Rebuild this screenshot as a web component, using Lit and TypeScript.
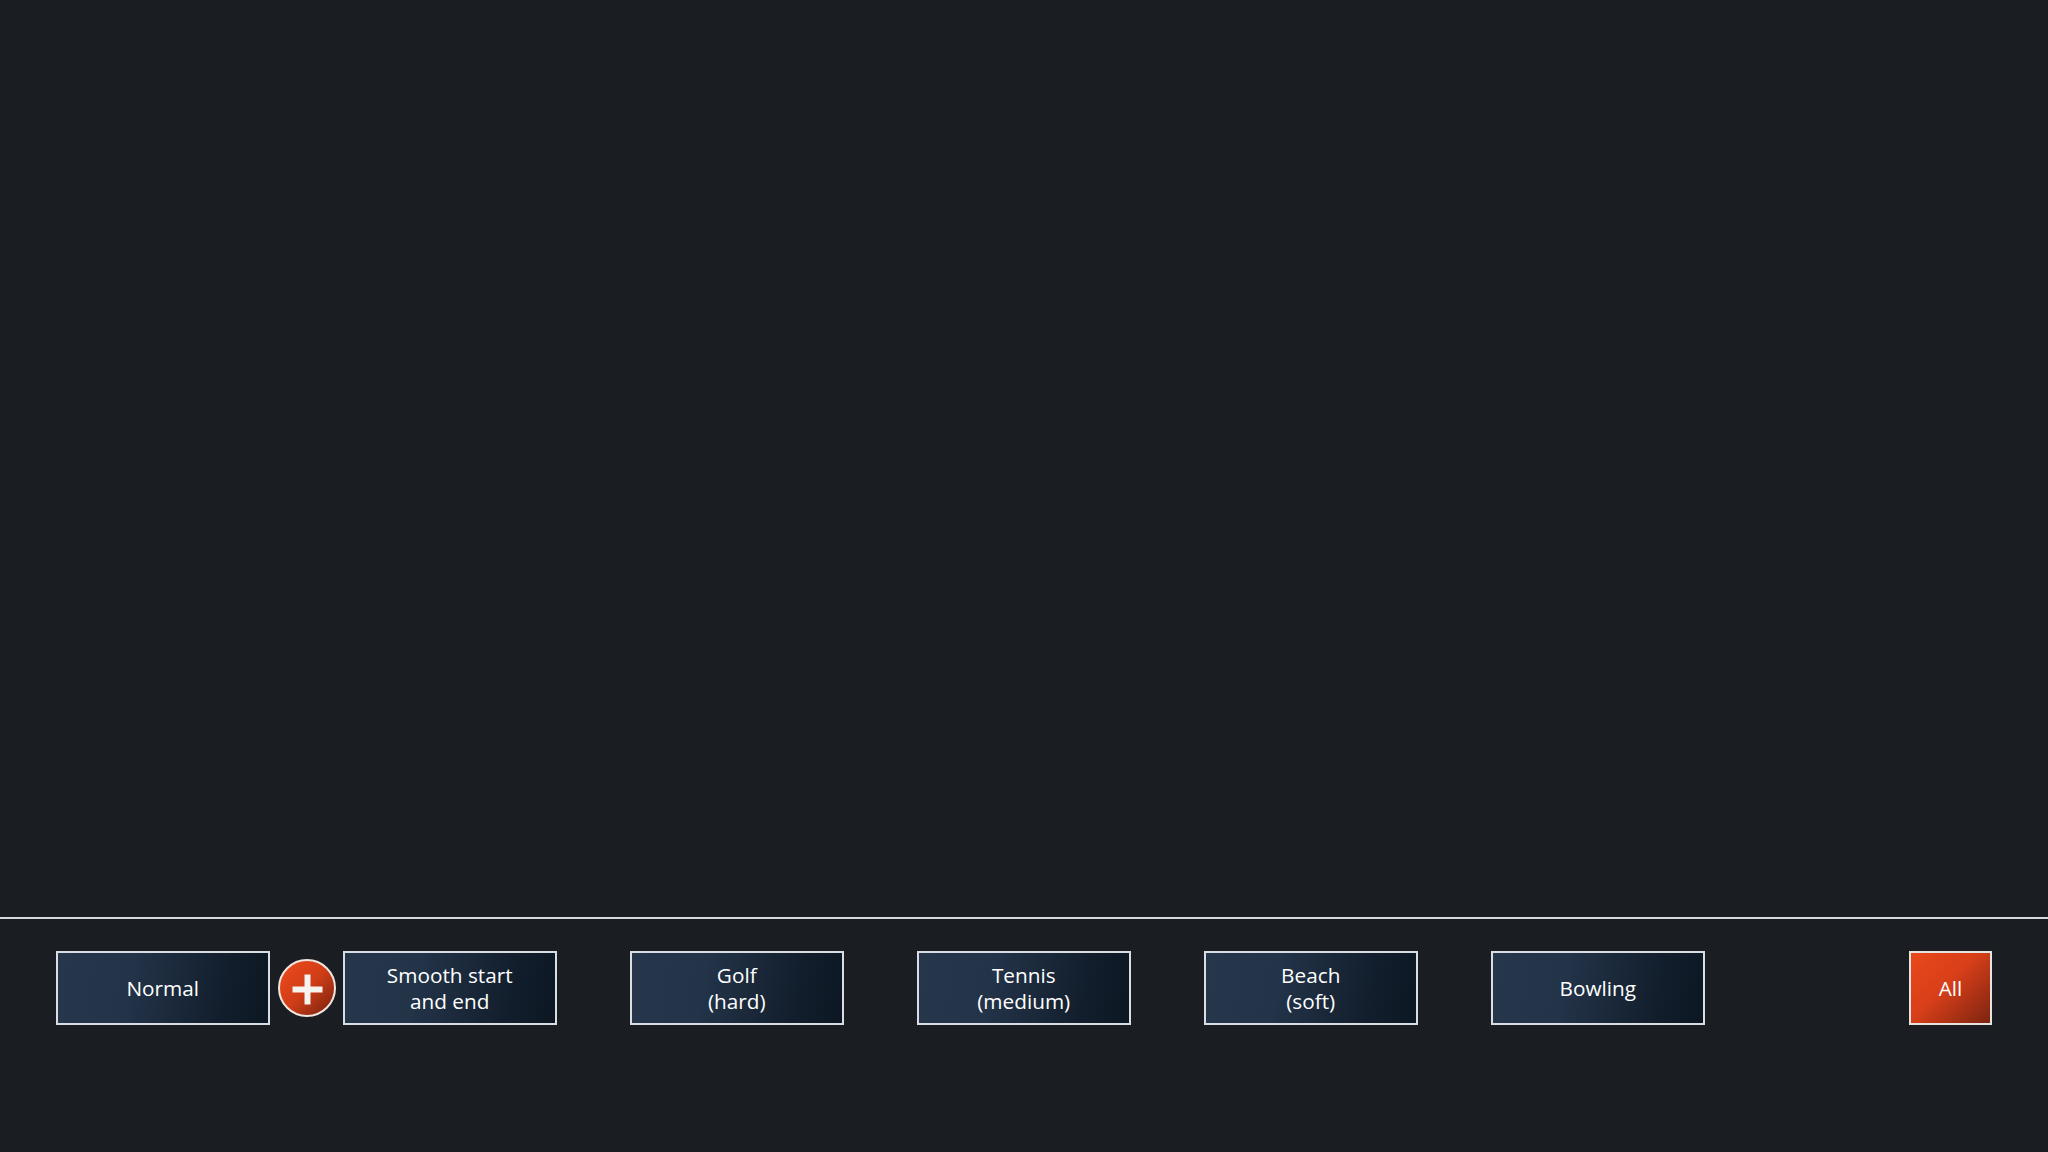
import { LitElement, html, css } from "lit";
import { customElement } from "lit/decorators.js";

const modes: string[][] = [
  ["Golf", "(hard)"],
  ["Tennis", "(medium)"],
  ["Beach", "(soft)"],
  ["Bowling"],
];

@customElement("app-root")
export class AppRoot extends LitElement {
  static styles = css`
    :host {
      display: flex;
      flex-direction: column;
      height: 100vh;
      background: #1a1e23;
      font-family: "Open Sans", "Noto Sans", sans-serif;
      color: #ffffff;
    }
    .stage { flex: 1; }
    .bar {
      height: 235px;
      box-sizing: border-box;
      border-top: 2px solid #d6dade;
      padding: 32px 56px 0;
      display: flex;
      align-items: flex-start;
      gap: 73.5px;
    }
    .pair { display: flex; align-items: center; }
    .btn {
      box-sizing: border-box;
      width: 213.5px;
      height: 74px;
      flex: none;
      border: 2px solid #d9dee4;
      background: linear-gradient(100deg, #26374c 0%, #233348 35%, #121e2c 78%, #0c1723 100%);
      display: flex;
      flex-direction: column;
      align-items: center;
      justify-content: center;
      font-size: 20.75px;
      font-weight: 500;
      line-height: 26px;
      text-align: center;
    }
    .all {
      width: 83px;
      margin-left: auto;
      background: linear-gradient(135deg, #e9481b 0%, #d83f19 45%, #7c2411 100%);
      border-color: #e6e3e0;
    }
    .plus {
      width: 58px;
      height: 58px;
      flex: none;
      display: block;
      margin: 0 7px 0 8.5px;
    }
  `;

  render() {
    return html`
      <div class="stage"></div>
      <div class="bar">
        <div class="pair">
          <div class="btn"><span>Normal</span></div>
          <svg class="plus" viewBox="0 0 58 58" aria-hidden="true">
            <defs>
              <linearGradient id="r" x1="0.12" y1="0.12" x2="0.9" y2="0.9">
                <stop offset="0" stop-color="#e9481b" />
                <stop offset="0.5" stop-color="#cf3d17" />
                <stop offset="1" stop-color="#842610" />
              </linearGradient>
            </defs>
            <circle cx="29" cy="29" r="28" fill="url(#r)" stroke="#f1e6df" stroke-width="2" />
            <path d="M26.500 15.500h6v12h12v6h-12v12h-6v-12h-12v-6h12z" fill="#f6f2ee" />
          </svg>
          <div class="btn"><span>Smooth start</span><span>and end</span></div>
        </div>
        ${modes.map(
          (m) => html`<div class="btn">${m.map((l) => html`<span>${l}</span>`)}</div>`
        )}
        <div class="btn all"><span>All</span></div>
      </div>
    `;
  }
}
